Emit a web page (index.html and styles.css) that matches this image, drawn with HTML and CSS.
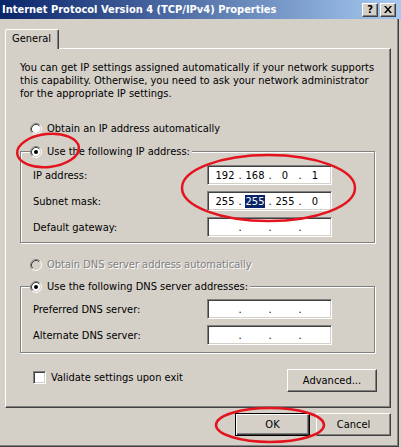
FILE: index.html
```html
<!DOCTYPE html>
<html>
<head>
<meta charset="utf-8">
<title>Internet Protocol Version 4 (TCP/IPv4) Properties</title>
<link rel="stylesheet" href="styles.css">
</head>
<body>
<div class="titlebar">
  <span class="title">Internet Protocol Version 4 (TCP/IPv4) Properties</span>
  <div class="caption-btns">
    <span class="cbtn help">?</span>
    <span class="cbtn close"><svg width="8" height="7" viewBox="0 0 8 7"><path d="M0 0h2l2 2.5L6 0h2L5 3.5 8 7H6L4 4.5 2 7H0l3-3.5z" fill="#000"/></svg></span>
  </div>
</div>
<div class="client">
  <div class="tab">General</div>
  <div class="panel">
    <p class="desc">You can get IP settings assigned automatically if your network supports<br>this capability. Otherwise, you need to ask your network administrator<br>for the appropriate IP settings.</p>

    <div class="radio-row r-first">
      <svg class="radio" viewBox="0 0 12 12"><circle cx="6" cy="6" r="4" fill="#fff"/><path d="M2.11 9.89A5.5 5.5 0 0 1 9.89 2.11" fill="none" stroke="#808080"/><path d="M9.89 2.11A5.5 5.5 0 0 1 2.11 9.89" fill="none" stroke="#fff"/><path d="M2.82 9.18A4.5 4.5 0 0 1 9.18 2.82" fill="none" stroke="#404040"/><path d="M9.18 2.82A4.5 4.5 0 0 1 2.82 9.18" fill="none" stroke="#d4d0c8"/></svg>
      <span>Obtain an IP address automatically</span>
    </div>

    <div class="group group-ip">
      <div class="radio-row legend">
        <svg class="radio" viewBox="0 0 12 12"><circle cx="6" cy="6" r="4" fill="#fff"/><path d="M2.11 9.89A5.5 5.5 0 0 1 9.89 2.11" fill="none" stroke="#808080"/><path d="M9.89 2.11A5.5 5.5 0 0 1 2.11 9.89" fill="none" stroke="#fff"/><path d="M2.82 9.18A4.5 4.5 0 0 1 9.18 2.82" fill="none" stroke="#404040"/><path d="M9.18 2.82A4.5 4.5 0 0 1 2.82 9.18" fill="none" stroke="#d4d0c8"/><circle cx="6" cy="6" r="2" fill="#000"/></svg>
        <span>Use the following IP address:</span>
      </div>
      <div class="fields">
        <span class="label">IP address:</span>
        <div class="ipbox"><span class="oct">192</span><span class="dot">.</span><span class="oct">168</span><span class="dot">.</span><span class="oct">0</span><span class="dot">.</span><span class="oct">1</span></div>
        <span class="label">Subnet mask:</span>
        <div class="ipbox"><span class="oct">255</span><span class="dot">.</span><span class="oct"><span class="sel">255</span></span><span class="dot">.</span><span class="oct">255</span><span class="dot">.</span><span class="oct">0</span></div>
        <span class="label">Default gateway:</span>
        <div class="ipbox"><span class="oct"></span><span class="dot">.</span><span class="oct"></span><span class="dot">.</span><span class="oct"></span><span class="dot">.</span><span class="oct"></span></div>
      </div>
    </div>

    <div class="radio-row disabled r-dns-auto">
      <svg class="radio" viewBox="0 0 12 12"><circle cx="6" cy="6" r="4" fill="#d4d0c8"/><path d="M2.11 9.89A5.5 5.5 0 0 1 9.89 2.11" fill="none" stroke="#808080"/><path d="M9.89 2.11A5.5 5.5 0 0 1 2.11 9.89" fill="none" stroke="#fff"/><path d="M2.82 9.18A4.5 4.5 0 0 1 9.18 2.82" fill="none" stroke="#404040"/><path d="M9.18 2.82A4.5 4.5 0 0 1 2.82 9.18" fill="none" stroke="#d4d0c8"/></svg>
      <span>Obtain DNS server address automatically</span>
    </div>

    <div class="group group-dns">
      <div class="radio-row legend">
        <svg class="radio" viewBox="0 0 12 12"><circle cx="6" cy="6" r="4" fill="#fff"/><path d="M2.11 9.89A5.5 5.5 0 0 1 9.89 2.11" fill="none" stroke="#808080"/><path d="M9.89 2.11A5.5 5.5 0 0 1 2.11 9.89" fill="none" stroke="#fff"/><path d="M2.82 9.18A4.5 4.5 0 0 1 9.18 2.82" fill="none" stroke="#404040"/><path d="M9.18 2.82A4.5 4.5 0 0 1 2.82 9.18" fill="none" stroke="#d4d0c8"/><circle cx="6" cy="6" r="2" fill="#000"/></svg>
        <span>Use the following DNS server addresses:</span>
      </div>
      <div class="fields dns-fields">
        <span class="label">Preferred DNS server:</span>
        <div class="ipbox"><span class="oct"></span><span class="dot">.</span><span class="oct"></span><span class="dot">.</span><span class="oct"></span><span class="dot">.</span><span class="oct"></span></div>
        <span class="label">Alternate DNS server:</span>
        <div class="ipbox"><span class="oct"></span><span class="dot">.</span><span class="oct"></span><span class="dot">.</span><span class="oct"></span><span class="dot">.</span><span class="oct"></span></div>
      </div>
    </div>

    <div class="bottom-row">
      <div class="check-row"><span class="checkbox"></span><span>Validate settings upon exit</span></div>
      <div class="btn advanced">Advanced...</div>
    </div>
  </div>
  <div class="dialog-btns">
    <div class="btn default">OK</div>
    <div class="btn">Cancel</div>
  </div>
</div>
<svg class="annotations" width="401" height="447" viewBox="0 0 401 447">
  <ellipse cx="48" cy="150.5" rx="31" ry="16.5" transform="rotate(-6 48 150.5)"/>
  <ellipse cx="268.5" cy="188" rx="86.5" ry="33"/>
  <ellipse cx="270" cy="425" rx="54" ry="17"/>
</svg>
</body>
</html>
```

FILE: styles.css
```css
* { box-sizing: border-box; }

body {
  margin: 0;
  width: 401px;
  height: 447px;
  overflow: hidden;
  position: relative;
  background: #d4d0c8;
  color: #000;
  font-family: "DejaVu Sans Condensed", "Liberation Sans", sans-serif;
  font-size: 11px;
}

.titlebar {
  height: 19px;
  display: flex;
  align-items: center;
  padding: 0 5px 0 2px;
  background: linear-gradient(to right, #0a246a, #a6caf0);
}

.title {
  flex: 1;
  color: #fff;
  font-weight: bold;
  white-space: nowrap;
  line-height: 13px;
}

.caption-btns {
  display: flex;
  gap: 2px;
}

.cbtn {
  width: 16px;
  height: 14px;
  background: #d4d0c8;
  border: 1px solid;
  border-color: #fff #404040 #404040 #fff;
  box-shadow: inset -1px -1px #808080;
  display: flex;
  align-items: center;
  justify-content: center;
  font-weight: bold;
  font-size: 11px;
  line-height: 12px;
}

.client {
  width: 399px;
  height: 428px;
  border-right: 1px solid #404040;
  border-bottom: 1px solid #404040;
  box-shadow: inset -1px -1px #808080;
  padding: 10px 0 0 5px;
}

.tab {
  position: relative;
  z-index: 1;
  width: 54px;
  height: 20px;
  margin-bottom: -1px;
  padding: 2px 0 0 6px;
  line-height: 13px;
  background: #d4d0c8;
  border-top: 1px solid #fff;
  border-left: 1px solid #fff;
  border-right: 1px solid #404040;
  box-shadow: inset -1px 0 #808080;
  border-top-left-radius: 2px;
  border-top-right-radius: 2px;
}

.panel {
  width: 386px;
  height: 360px;
  border: 1px solid;
  border-color: #fff #404040 #404040 #fff;
  box-shadow: inset -1px -1px #808080;
  padding: 12px 14px 0 14px;
}

.desc {
  margin: 0;
  line-height: 13px;
  white-space: nowrap;
}

.radio-row {
  display: flex;
  align-items: center;
  gap: 5px;
  height: 13px;
  line-height: 13px;
  white-space: nowrap;
}

.radio {
  width: 12px;
  height: 12px;
  flex: none;
}

.r-first { margin: 22px 0 0 10px; }

.disabled { color: #808080; text-shadow: 1px 1px #fff; }

.r-dns-auto { margin: 15px 0 0 10px; }

.group {
  width: 355px;
  border: 1px solid #808080;
  box-shadow: inset 1px 1px #fff, 1px 1px #fff;
}

.group-ip { margin-top: 16px; height: 92px; }
.group-dns { margin-top: 15px; height: 67px; }

.legend {
  width: max-content;
  margin: -7px 0 0 9px;
  padding-right: 2px;
  background: #d4d0c8;
}

.fields {
  display: grid;
  grid-template-columns: 174px 125px;
  row-gap: 6px;
  align-items: center;
  margin: 7px 0 0 12px;
}

.dns-fields { margin-top: 6px; }

.label { line-height: 13px; white-space: nowrap; }

.ipbox {
  height: 20px;
  width: 125px;
  background: #fff;
  border: 1px solid;
  border-color: #808080 #fff #fff #808080;
  box-shadow: inset 1px 1px #404040, inset -1px -1px #d4d0c8;
  display: flex;
  align-items: center;
  padding-left: 4px;
  line-height: 13px;
}

.oct { width: 26px; display: flex; justify-content: center; }
.dot { width: 4px; display: flex; justify-content: center; }

.sel { background: #0a246a; color: #fff; padding: 0 1px; }

.bottom-row {
  display: flex;
  align-items: flex-start;
  margin-top: 16px;
}

.check-row {
  display: flex;
  align-items: center;
  gap: 5px;
  margin: 2px 0 0 13px;
  line-height: 13px;
  white-space: nowrap;
}

.checkbox {
  width: 13px;
  height: 13px;
  background: #fff;
  border: 1px solid;
  border-color: #808080 #fff #fff #808080;
  box-shadow: inset 1px 1px #404040, inset -1px -1px #d4d0c8;
}

.btn {
  width: 75px;
  height: 23px;
  background: #d4d0c8;
  border: 1px solid;
  border-color: #fff #404040 #404040 #fff;
  box-shadow: inset -1px -1px #808080;
  display: flex;
  align-items: center;
  justify-content: center;
  line-height: 13px;
}

.advanced {
  width: 90px;
  margin-left: auto;
  margin-right: -1px;
}

.btn.default {
  border-color: #000;
  box-shadow: inset 1px 1px #fff, inset -1px -1px #404040, inset -2px -2px #808080;
}

.dialog-btns {
  width: 386px;
  display: flex;
  justify-content: flex-end;
  gap: 6px;
  margin-top: 5px;
}

.annotations {
  position: absolute;
  top: 0;
  left: 0;
  pointer-events: none;
  fill: none;
  stroke: #e3141e;
  stroke-width: 2.5;
}
```
